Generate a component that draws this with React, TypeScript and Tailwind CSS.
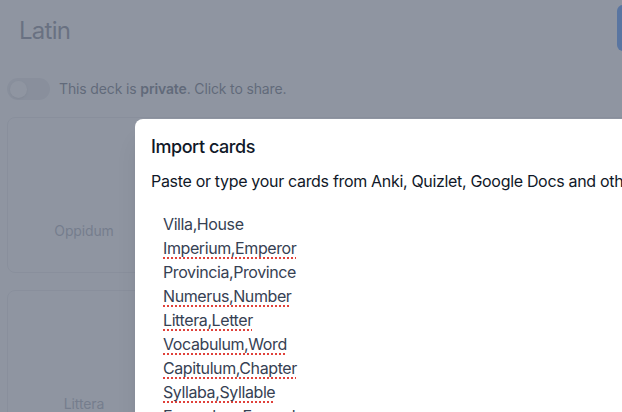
import React from "react";

const lines: { t: string; err: boolean }[] = [
  { t: "Villa,House", err: false },
  { t: "Imperium,Emperor", err: true },
  { t: "Provincia,Province", err: false },
  { t: "Numerus,Number", err: true },
  { t: "Littera,Letter", err: true },
  { t: "Vocabulum,Word", err: true },
  { t: "Capitulum,Chapter", err: true },
  { t: "Syllaba,Syllable", err: true },
  { t: "Exemplum,Example", err: true },
];

export default function App() {
  return (
    <div
      className="relative w-[622px] h-[412px] overflow-hidden bg-white"
      style={{ fontFamily: "Inter, 'Noto Sans', sans-serif" }}
    >
      {/* underlying page */}
      <div className="flex flex-col px-[7px] pt-[15px]">
        <div className="flex items-start justify-between">
          <h1 className="pl-[12px] text-2xl leading-8 tracking-[-0.03em] text-gray-500">Latin</h1>
          <div className="mt-[-10px] mr-[-68px] h-[46px] w-[66px] rounded-md bg-blue-500" />
        </div>
        <div className="mt-[27px] flex items-center gap-[9px]">
          <div className="flex h-[22px] w-[43px] items-center rounded-full bg-gray-200 px-[3px]">
            <div className="h-[17px] w-[17px] rounded-full bg-white shadow" />
          </div>
          <p className="text-sm tracking-[-0.01em] text-gray-600">
            This deck is <span className="font-semibold">private</span>. Click to share.
          </p>
        </div>
        <div className="mt-[17px] flex flex-col gap-[17px]">
          {["Oppidum", "Littera"].map((w) => (
            <div key={w} className="h-[156px] w-[640px] rounded-lg border border-gray-200 bg-white">
              <div className="flex w-[152px] justify-center pt-[103px] text-sm tracking-[-0.01em] text-gray-400">{w}</div>
            </div>
          ))}
        </div>
      </div>

      {/* overlay */}
      <div className="absolute inset-0 bg-gray-500/75" />

      {/* modal */}
      <div className="absolute left-[135px] top-[119px] w-[620px] h-[400px] rounded-lg bg-white shadow-xl px-4 pt-[14px]">
        <h2 className="text-lg leading-7 font-medium tracking-[-0.025em] text-gray-900">Import cards</h2>
        <p className="mt-[8px] whitespace-nowrap text-base tracking-[-0.02em] text-gray-900">
          Paste or type your cards from Anki, Quizlet, Google Docs and other apps.
        </p>
        <div className="mt-[19px] px-3 text-base leading-6 tracking-[-0.025em] text-gray-700">
          {lines.map((l) => (
            <div key={l.t}>
              <span
                className={
                  l.err
                    ? "underline decoration-dotted decoration-[#e0413a] decoration-2 underline-offset-[3px]"
                    : ""
                }
              >
                {l.t}
              </span>
            </div>
          ))}
        </div>
      </div>
    </div>
  );
}
